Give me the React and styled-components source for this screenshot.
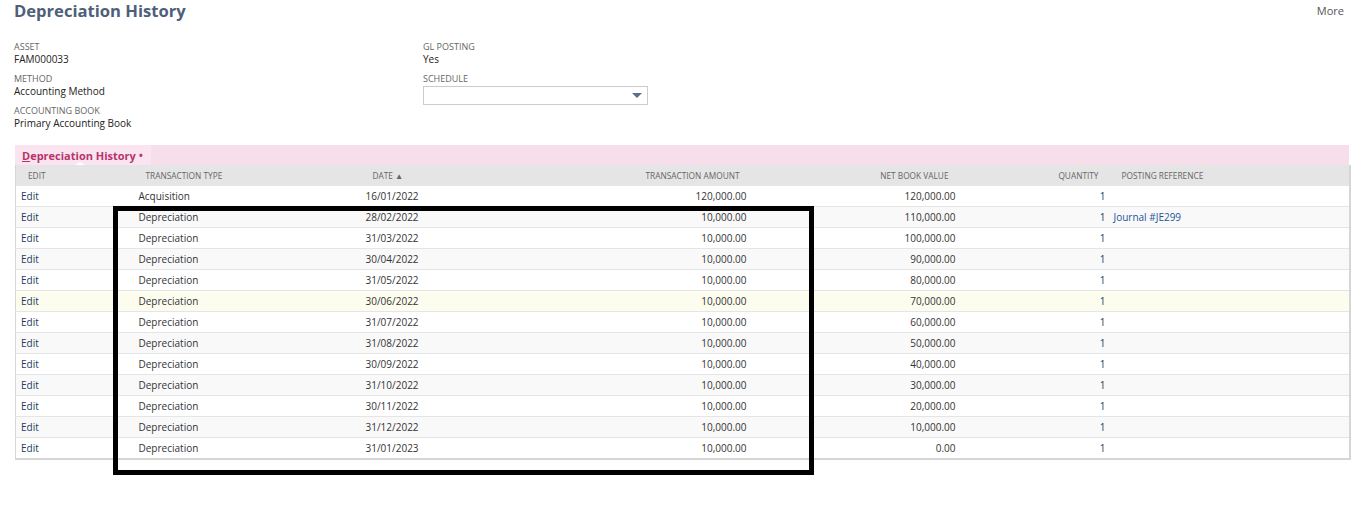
import styled, { createGlobalStyle } from 'styled-components'

const GlobalStyle = createGlobalStyle`
  body {
    margin: 0;
    background: #fff;
    font-family: "Open Sans", "Liberation Sans", sans-serif;
    color: #333;
  }
`

const rows = [
  ['Acquisition', '16/01/2022', '120,000.00', '120,000.00', '1', ''],
  ['Depreciation', '28/02/2022', '10,000.00', '110,000.00', '1', 'Journal #JE299'],
  ['Depreciation', '31/03/2022', '10,000.00', '100,000.00', '1', ''],
  ['Depreciation', '30/04/2022', '10,000.00', '90,000.00', '1', ''],
  ['Depreciation', '31/05/2022', '10,000.00', '80,000.00', '1', ''],
  ['Depreciation', '30/06/2022', '10,000.00', '70,000.00', '1', ''],
  ['Depreciation', '31/07/2022', '10,000.00', '60,000.00', '1', ''],
  ['Depreciation', '31/08/2022', '10,000.00', '50,000.00', '1', ''],
  ['Depreciation', '30/09/2022', '10,000.00', '40,000.00', '1', ''],
  ['Depreciation', '31/10/2022', '10,000.00', '30,000.00', '1', ''],
  ['Depreciation', '30/11/2022', '10,000.00', '20,000.00', '1', ''],
  ['Depreciation', '31/12/2022', '10,000.00', '10,000.00', '1', ''],
  ['Depreciation', '31/01/2023', '10,000.00', '0.00', '1', ''],
]

const Page = styled.div`
  position: relative;
  width: 1365px;
  height: 519px;
  padding-left: 14px;
  box-sizing: border-box;
`
const TopBar = styled.div`
  display: flex;
  justify-content: space-between;
  align-items: flex-start;
  height: 22px;
  padding-right: 21px;
`
const Title = styled.h1`
  margin: 0;
  font-size: 16.6px;
  line-height: 22px;
  font-weight: 700;
  color: #4d5f79;
`
const More = styled.span`
  font-size: 11px;
  line-height: 22px;
  color: #555;
`
const Fields = styled.div`
  display: grid;
  grid-template-columns: 409px 240px;
  margin-top: 18px;
`
const FieldCol = styled.div`
  display: flex;
  flex-direction: column;
  gap: 6px;
`
const Field = styled.div`
  display: flex;
  flex-direction: column;
`
const Label = styled.span`
  font-size: 9px;
  line-height: 13px;
  color: #666;
  text-transform: uppercase;
`
const Value = styled.span`
  font-size: 10px;
  line-height: 13px;
  color: #222;
`
const Select = styled.div`
  width: 225px;
  height: 19px;
  border: 1px solid #ccc;
  box-sizing: border-box;
  margin-top: 1px;
  display: flex;
  align-items: center;
  justify-content: flex-end;
  padding-right: 5px;
`
const Arrow = styled.span`
  width: 0;
  height: 0;
  border-left: 5px solid transparent;
  border-right: 5px solid transparent;
  border-top: 5px solid #5a6f8d;
`
const TableWrap = styled.div`
  margin-top: 15px;
  margin-left: 1px;
  width: 1334px;
`
const TabBar = styled.div`
  height: 20px;
  background: #f7deeb;
  display: flex;
`
const Tab = styled.div`
  position: relative;
  padding: 0 8px 0 7px;
  display: flex;
  align-items: center;
  font-size: 11px;
  font-weight: 700;
  color: #b7346c;
  background: #f9e4ef;

  &::after {
    content: '';
    position: absolute;
    left: 60px;
    bottom: 0;
    border-left: 5px solid transparent;
    border-right: 5px solid transparent;
    border-bottom: 3px solid #fff;
  }
`
const Dot = styled.span`
  font-size: 10px;
  margin-left: 3px;
`
const Table = styled.table`
  width: 1334px;
  table-layout: fixed;
  border-collapse: collapse;
  border-left: 1px solid #d6d6d6;
  border-right: 2px solid #d6d6d6;
  border-bottom: 2px solid #d6d6d6;
`
const Th = styled.th`
  height: 21px;
  padding: 0 12px 0 12px;
  background: #e5e5e5;
  font-size: 8.3px;
  font-weight: 400;
  color: #666;
  text-transform: uppercase;
  text-align: ${(p) => (p.$right ? 'right' : 'left')};
  white-space: nowrap;
`
const Tr = styled.tr`
  background: ${(p) => (p.$hover ? '#fdfdef' : p.$odd ? '#f9f9f9' : '#fff')};
`
const Td = styled.td`
  height: 20px;
  padding: 0 5px;
  border-bottom: 1px solid #e5e5e5;
  font-size: 10px;
  color: ${(p) => p.$color || '#333'};
  text-align: ${(p) => (p.$right ? 'right' : 'left')};
  white-space: nowrap;
`
const Highlight = styled.div`
  position: absolute;
  left: 113px;
  top: 206px;
  width: 701px;
  height: 269px;
  border: 5px solid #000;
  box-sizing: border-box;
  pointer-events: none;
`

const widths = [118, 227, 200, 191, 209, 150, 239]

export default function App() {
  return (
    <>
      <GlobalStyle />
      <Page>
        <TopBar>
          <Title>Depreciation History</Title>
          <More>More</More>
        </TopBar>
        <Fields>
          <FieldCol>
            <Field>
              <Label>Asset</Label>
              <Value>FAM000033</Value>
            </Field>
            <Field>
              <Label>Method</Label>
              <Value>Accounting Method</Value>
            </Field>
            <Field>
              <Label>Accounting Book</Label>
              <Value>Primary Accounting Book</Value>
            </Field>
          </FieldCol>
          <FieldCol>
            <Field>
              <Label>GL Posting</Label>
              <Value>Yes</Value>
            </Field>
            <Field>
              <Label>Schedule</Label>
              <Select>
                <Arrow />
              </Select>
            </Field>
          </FieldCol>
        </Fields>
        <TableWrap>
          <TabBar>
            <Tab>
              <span>
                <u>D</u>epreciation History
              </span>
              <Dot>•</Dot>
            </Tab>
          </TabBar>
          <Table>
            <colgroup>
              {widths.map((w, i) => (
                <col key={i} style={{ width: w }} />
              ))}
            </colgroup>
            <thead>
              <tr>
                <Th>Edit</Th>
                <Th>Transaction Type</Th>
                <Th>Date ▲</Th>
                <Th $right>Transaction Amount</Th>
                <Th $right>Net Book Value</Th>
                <Th $right>Quantity</Th>
                <Th style={{ paddingLeft: 11 }}>Posting Reference</Th>
              </tr>
            </thead>
            <tbody>
              {rows.map((r, i) => (
                <Tr key={i} $odd={i % 2 === 1} $hover={i === 5}>
                  <Td $color="#253b5e">Edit</Td>
                  <Td>{r[0]}</Td>
                  <Td>{r[1]}</Td>
                  <Td $right>{r[2]}</Td>
                  <Td $right>{r[3]}</Td>
                  <Td $right $color="#24385b">{r[4]}</Td>
                  <Td $color="#255599" style={{ paddingLeft: 3 }}>{r[5]}</Td>
                </Tr>
              ))}
            </tbody>
          </Table>
        </TableWrap>
        <Highlight />
      </Page>
    </>
  )
}
